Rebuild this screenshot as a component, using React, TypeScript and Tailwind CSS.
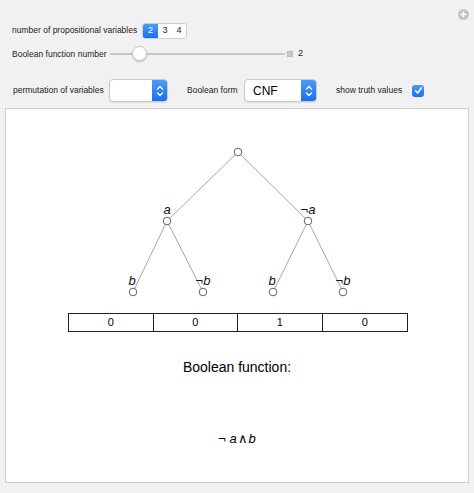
import React from 'react';

const nodes = {
  root: { x: 232, y: 43 },
  a: { x: 161, y: 112 },
  na: { x: 302, y: 112 },
  leaves: [
    { x: 127, y: 183, label: 'b', parent: 'a' },
    { x: 197, y: 183, label: '¬b', parent: 'a' },
    { x: 267, y: 183, label: 'b', parent: 'na' },
    { x: 337, y: 183, label: '¬b', parent: 'na' },
  ],
};

const truthValues = ['0', '0', '1', '0'];

function Stepper() {
  return (
    <svg width="8" height="14" viewBox="0 0 8 14" fill="none" stroke="white" strokeWidth="1.4" strokeLinecap="round" strokeLinejoin="round">
      <path d="M1.5 5 L4 2.5 L6.5 5" />
      <path d="M1.5 9 L4 11.5 L6.5 9" />
    </svg>
  );
}

function Select({ width, value }: { width: string; value?: string }) {
  return (
    <div className={`${width} shrink-0 h-[23px] flex rounded-[4px] border border-[#c9c9c9] bg-white shadow-[0_1px_1px_rgba(0,0,0,0.08)] overflow-hidden`}>
      <div className="flex-1 flex items-center pl-[8px] text-[12px] text-black">{value}</div>
      <div className="w-[15px] bg-gradient-to-b from-[#4a9bf7] to-[#1a6ef2] flex items-center justify-center">
        <Stepper />
      </div>
    </div>
  );
}

export default function App() {
  return (
    <div className="relative w-[474px] h-[493px] bg-[#f1f1f1] font-['Liberation_Sans',Arial,sans-serif] text-[#222]">
      {/* plus button top right */}
      <div className="absolute left-[458px] top-[9px] w-[11px] h-[11px] rounded-full bg-[#c4c4c4] flex items-center justify-center">
        <svg width="7" height="7" viewBox="0 0 7 7" stroke="white" strokeWidth="1.4">
          <path d="M3.5 0.5 V6.5 M0.5 3.5 H6.5" />
        </svg>
      </div>

      <div className="pt-[22px] pl-[12px]">
        {/* number of variables */}
        <div className="flex items-center h-[17px]">
          <span className="w-[130px] shrink-0 whitespace-nowrap text-[8.5px]">number of propositional variables</span>
          <div className="flex h-[16px] rounded-[3px] border border-[#cfcfcf] bg-white text-[9px] overflow-hidden">
            <div className="w-[15px] bg-gradient-to-b from-[#4a9bf7] to-[#1a6ef2] text-white flex items-center justify-center">2</div>
            <div className="w-[14px] flex items-center justify-center">3</div>
            <div className="w-[14px] flex items-center justify-center">4</div>
          </div>
        </div>

        {/* slider */}
        <div className="flex items-center h-[16px] mt-[7px]">
          <span className="w-[98px] shrink-0 whitespace-nowrap text-[8.5px]">Boolean function number</span>
          <div className="relative w-[175px] h-[2px] bg-[#c6c6c6] rounded-full">
            <div className="absolute left-[22px] top-[-7px] w-[15px] h-[15px] rounded-full bg-white border border-[#c9c9c9] shadow-[0_1px_2px_rgba(0,0,0,0.2)]" />
          </div>
          <div className="ml-[2px] w-[6px] h-[6px] bg-[#c9c9c9] border border-[#bdbdbd]" />
          <span className="ml-[5px] text-[9px]">2</span>
        </div>

        {/* selectors row */}
        <div className="flex items-center h-[23px] mt-[17px] pl-[1px]">
          <span className="w-[96px] shrink-0 whitespace-nowrap text-[8.5px]">permutation of variables</span>
          <Select width="w-[59px]" />
          <span className="ml-[19px] w-[57px] shrink-0 whitespace-nowrap text-[8.5px]">Boolean form</span>
          <Select width="w-[73px]" value="CNF" />
          <span className="ml-[19px] w-[76px] shrink-0 whitespace-nowrap text-[8.5px]">show truth values</span>
          <div className="w-[12px] h-[12px] rounded-[3px] bg-gradient-to-b from-[#4a9bf7] to-[#1a6ef2] flex items-center justify-center">
            <svg width="9" height="9" viewBox="0 0 9 9" fill="none" stroke="white" strokeWidth="1.5" strokeLinecap="round" strokeLinejoin="round">
              <path d="M1.5 4.8 L3.6 7 L7.5 1.8" />
            </svg>
          </div>
        </div>
      </div>

      {/* output panel */}
      <div className="ml-[5px] mt-[6px] w-[464px] h-[375px] bg-white border border-[#cdcdcd]">
        <svg width="462" height="203" viewBox="0 0 462 203" className="block">
          <g stroke="#9ea8ba" strokeWidth="1">
            <line x1={nodes.root.x} y1={nodes.root.y} x2={nodes.a.x} y2={nodes.a.y} />
            <line x1={nodes.root.x} y1={nodes.root.y} x2={nodes.na.x} y2={nodes.na.y} />
            {nodes.leaves.map((l, i) => {
              const p = l.parent === 'a' ? nodes.a : nodes.na;
              return <line key={i} x1={p.x} y1={p.y} x2={l.x} y2={l.y} />;
            })}
          </g>
          <g fill="white" stroke="#555" strokeWidth="0.9">
            <circle cx={nodes.root.x} cy={nodes.root.y} r="3.8" />
            <circle cx={nodes.a.x} cy={nodes.a.y} r="3.8" />
            <circle cx={nodes.na.x} cy={nodes.na.y} r="3.8" />
            {nodes.leaves.map((l, i) => (
              <circle key={i} cx={l.x} cy={l.y} r="3.8" />
            ))}
          </g>
          <g fontFamily="Liberation Sans, Arial, sans-serif" fontSize="13" fontStyle="italic" fill="#111" textAnchor="middle">
            <text x={nodes.a.x} y={105}>a</text>
            <text x={nodes.na.x} y={105}>¬a</text>
            {nodes.leaves.map((l, i) => (
              <text key={i} x={l.label === 'b' ? l.x - 1 : l.x} y={176}>{l.label}</text>
            ))}
          </g>
        </svg>

        <div className="ml-[62px] mt-[1px] w-[340px] h-[19px] grid grid-cols-4 border border-[#222] text-[11px] text-black">
          {truthValues.map((v, i) => (
            <div key={i} className={`flex items-center justify-center ${i < 3 ? 'border-r border-[#222]' : ''}`}>{v}</div>
          ))}
        </div>

        <div className="mt-[26px] text-center text-[14px] text-black leading-[18px]">Boolean function:</div>

        <div className="mt-[55px] text-center text-[13px] text-black leading-[16px]">
          ¬ <span className="italic">a</span><span className="mx-[1px]">∧</span><span className="italic">b</span>
        </div>
      </div>
    </div>
  );
}
